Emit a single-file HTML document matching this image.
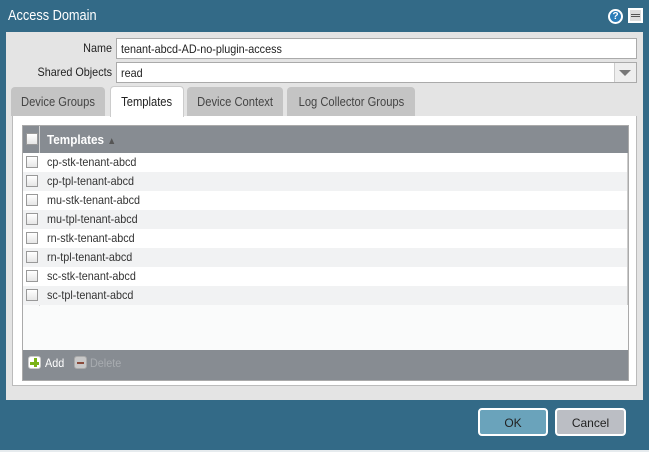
<!DOCTYPE html>
<html><head><meta charset="utf-8"><style>
*{margin:0;padding:0;box-sizing:border-box}
body{width:649px;height:452px;background:#336a87;font-family:"Liberation Sans",sans-serif;position:relative;overflow:hidden;font-size:12px;color:#222}
.abs{position:absolute}
.t{transform:scaleX(.9);transform-origin:left center;white-space:nowrap}
.title{left:8px;top:7px;color:#fff;font-size:15px;transform:scaleX(.85);transform-origin:left;white-space:nowrap}
.panel{left:6px;top:32px;width:637px;height:368px;background:#e4e4e4}
.inp{background:#fff;border:1px solid #aaa}
.lbl{text-align:right;width:100px;font-size:12px;transform:scaleX(.9);transform-origin:right center;white-space:nowrap}
.tab{top:87px;height:29px;background:#c4c4c4;border-radius:4px 4px 0 0;font-size:13px;color:#444;padding-top:7px;text-align:center}
.tab span{display:inline-block;transform:scaleX(.86);white-space:nowrap}
.row{left:23px;width:604px;height:19px}
.cb{position:absolute;left:3px;top:3px;width:12px;height:12px;border:1px solid #999;background:linear-gradient(#fff,#e6e6e6)}
.row .t{position:absolute;left:24px;top:2px;font-size:12px;color:#333}
.btn{top:408px;height:28px;border:2px solid #fff;border-radius:4px;font-size:12px;text-align:center;padding-top:6px;color:#222}
</style></head><body>
<div class="abs title">Access Domain</div>
<div class="abs" style="left:608px;top:9px;width:15px;height:15px;border-radius:50%;background:#2a7cb8;border:2px solid #fff;color:#fff;font-size:10px;font-weight:bold;text-align:center;line-height:11px">?</div>
<div class="abs" style="left:628px;top:8px;width:15px;height:15px;border:2px solid #fff;background:#ddd"><div style="margin:4px 1px;height:3px;border-top:1px solid #555;border-bottom:1px solid #555"></div></div>
<div class="abs panel"></div>
<div class="abs lbl" style="left:12px;top:41px">Name</div>
<div class="abs inp" style="left:116px;top:38px;width:521px;height:21px"></div>
<div class="abs t" style="left:121px;top:42px">tenant-abcd-AD-no-plugin-access</div>
<div class="abs lbl" style="left:12px;top:65px">Shared Objects</div>
<div class="abs inp" style="left:116px;top:62px;width:521px;height:21px"></div>
<div class="abs" style="left:614px;top:63px;width:22px;height:19px;background:#eee;border-left:1px solid #ccc"></div>
<div class="abs" style="left:619px;top:70px;width:0;height:0;border-left:6px solid transparent;border-right:6px solid transparent;border-top:6px solid #777"></div>
<div class="abs t" style="left:121px;top:66px">read</div>
<div class="abs" style="left:12px;top:116px;width:625px;height:270px;background:#fff;border:1px solid #bbb;border-top:none"></div>
<div class="abs tab" style="left:11px;width:94px"><span>Device Groups</span></div>
<div class="abs tab" style="left:110px;width:74px;background:#fff;top:86px;height:31px;border:1px solid #ccc;border-bottom:none;color:#222"><span>Templates</span></div>
<div class="abs tab" style="left:187px;width:96px"><span>Device Context</span></div>
<div class="abs tab" style="left:287px;width:128px"><span>Log Collector Groups</span></div>
<div class="abs" style="left:22px;top:125px;width:607px;height:256px;background:#fafbfb;border:1px solid #aaa"></div>
<div class="abs" style="left:23px;top:126px;width:605px;height:27px;background:#878c92"></div>
<div class="abs" style="left:39px;top:126px;width:1px;height:180px;background:#d4d4d4"></div>
<div class="abs cb" style="left:26px;top:133px"></div>
<div class="abs t" style="left:47px;top:132px;color:#fff;font-weight:bold;font-size:13px">Templates <span style="color:#555;font-size:10px">▲</span></div>
<div class="abs row" style="top:153px;background:#fff"><div class="cb"></div><div class="t">cp-stk-tenant-abcd</div></div>
<div class="abs row" style="top:172px;background:#f1f2f3"><div class="cb"></div><div class="t">cp-tpl-tenant-abcd</div></div>
<div class="abs row" style="top:191px;background:#fff"><div class="cb"></div><div class="t">mu-stk-tenant-abcd</div></div>
<div class="abs row" style="top:210px;background:#f1f2f3"><div class="cb"></div><div class="t">mu-tpl-tenant-abcd</div></div>
<div class="abs row" style="top:229px;background:#fff"><div class="cb"></div><div class="t">rn-stk-tenant-abcd</div></div>
<div class="abs row" style="top:248px;background:#f1f2f3"><div class="cb"></div><div class="t">rn-tpl-tenant-abcd</div></div>
<div class="abs row" style="top:267px;background:#fff"><div class="cb"></div><div class="t">sc-stk-tenant-abcd</div></div>
<div class="abs row" style="top:286px;background:#f1f2f3"><div class="cb"></div><div class="t">sc-tpl-tenant-abcd</div></div>
<div class="abs" style="left:627px;top:153px;width:1px;height:152px;background:#ccc"></div>
<div class="abs" style="left:23px;top:350px;width:605px;height:30px;background:#878c92"></div>
<div class="abs" style="left:28px;top:356px;width:13px;height:13px;border-radius:3px;background:#fff;border:1px solid #ccc"><div style="position:absolute;left:5px;top:1px;width:3px;height:9px;background:#7ab317"></div><div style="position:absolute;left:1px;top:5px;width:9px;height:3px;background:#7ab317"></div></div>
<div class="abs t" style="left:45px;top:356px;color:#fff">Add</div>
<div class="abs" style="left:74px;top:356px;width:13px;height:13px;border-radius:3px;background:#c8c8c8;border:1px solid #aaa"><div style="position:absolute;left:2px;top:5px;width:7px;height:2px;background:#8a4a3a"></div></div>
<div class="abs t" style="left:90px;top:356px;color:#a8acb0">Delete</div>
<div class="abs btn" style="left:478px;width:70px;background:#6aa3bb">OK</div>
<div class="abs btn" style="left:555px;width:71px;background:#bbbec4">Cancel</div>
<div class="abs" style="left:0;top:450px;width:649px;height:2px;background:#e6ebee"></div>
</body></html>
